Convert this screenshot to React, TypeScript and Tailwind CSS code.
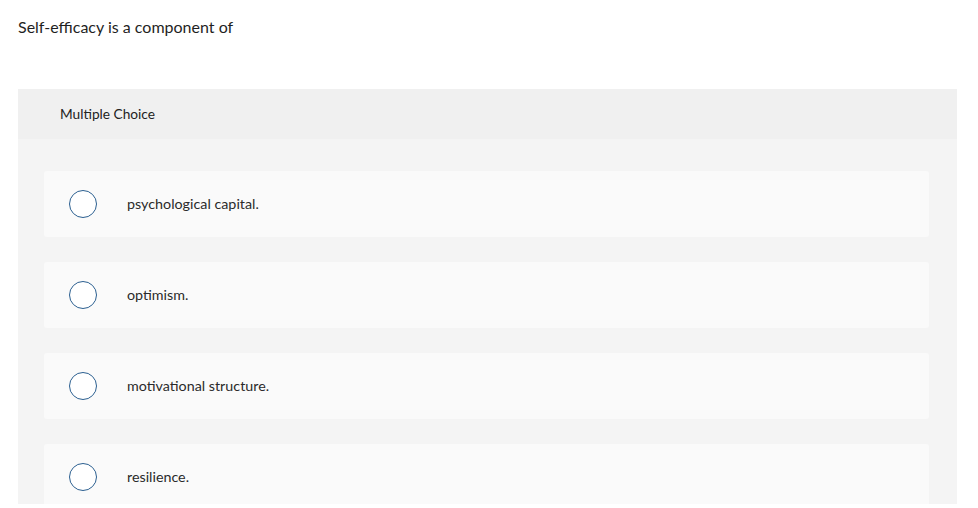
const options = [
  'psychological capital.',
  'optimism.',
  'motivational structure.',
  'resilience.',
]

const App = () => {
  return (
    <div className="h-[504px] overflow-hidden bg-white font-['Lato',_'Liberation_Sans',_sans-serif] text-[#1f1f1f]">
      <p className="pl-[18px] pt-[17px] text-[16px] leading-[20px]">Self-efficacy is a component of</p>
      <div className="mx-[18px] mt-[52px] rounded-t-[2px] bg-[#f4f4f4] w-[939px]">
        <div className="flex h-[50px] items-center bg-[#f0f0f0] pl-[42px] text-[13.7px] text-[#222]">
          Multiple Choice
        </div>
        <div className="flex flex-col gap-[25px] pt-[32px] pl-[26px] pr-[28px] pb-[40px]">
          {options.map((opt) => (
            <label key={opt} className="flex h-[66px] items-center rounded-[3px] bg-[#fafafa]">
              <span className="ml-[25px] h-[28px] w-[28px] shrink-0 rounded-full border-[1.5px] border-[#2b5f90] bg-white"></span>
              <span className="ml-[30px] text-[14.3px] text-[#2a2a2a]">{opt}</span>
            </label>
          ))}
        </div>
      </div>
    </div>
  )
}

export default App
